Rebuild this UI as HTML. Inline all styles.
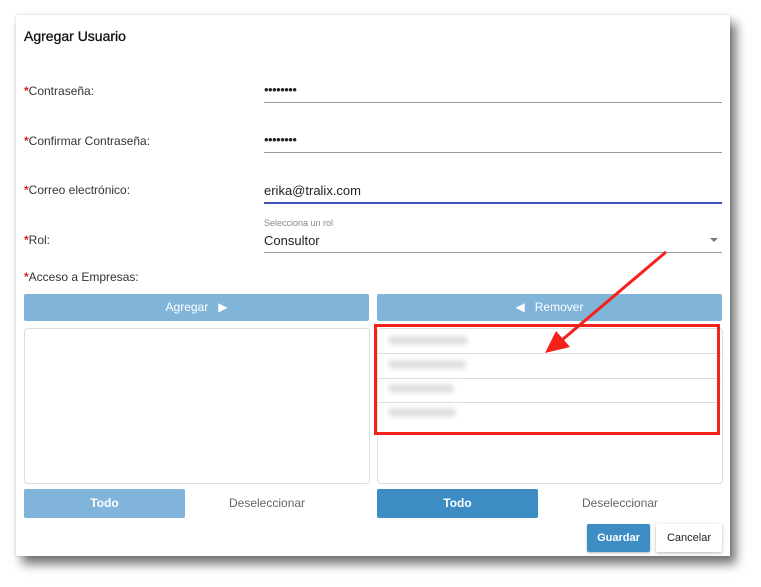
<!DOCTYPE html>
<html><head><style>
body{margin:0;width:761px;height:587px;background:#fff;position:relative;overflow:hidden;font-family:"Liberation Sans",sans-serif;color:#222}
.dlg{position:absolute;left:16px;top:15px;width:714px;height:541px;background:#fff;box-shadow:6px 8px 10px rgba(0,0,0,.55),0 0 3px rgba(0,0,0,.15)}
.a{position:absolute}
.lbl{font-size:12px;color:#333}
.lbl b{color:#e02020;font-weight:bold}
.ul{position:absolute;left:264px;width:458px;height:1px;background:#999}
.btn{position:absolute;color:#fff;font-size:12px;font-weight:bold;text-align:center;border-radius:2px}
.list{position:absolute;border:1px solid #ddd;border-radius:4px;background:#fff}
.blur{position:absolute;left:388px;height:9px;border-radius:4px;background:#e0e0e0;filter:blur(2.5px)}
.sep{position:absolute;left:378px;width:343px;height:1px;background:#ddd}
</style></head><body>
<div class="dlg"></div>
<div class="a" style="left:24px;top:28px;font-size:14px;color:#111;-webkit-text-stroke:0.3px #111">Agregar Usuario</div>
<div class="a lbl" style="left:24px;top:84px"><b>*</b>Contraseña:</div>
<div class="a lbl" style="left:24px;top:134px"><b>*</b>Confirmar Contraseña:</div>
<div class="a lbl" style="left:24px;top:183px"><b>*</b>Correo electrónico:</div>
<div class="a lbl" style="left:24px;top:233px"><b>*</b>Rol:</div>
<div class="a lbl" style="left:24px;top:270px"><b>*</b>Acceso a Empresas:</div>
<div class="a" style="left:264px;top:82px;font-size:13px;letter-spacing:-0.5px">••••••••</div>
<div class="ul" style="top:102px"></div>
<div class="a" style="left:264px;top:132px;font-size:13px;letter-spacing:-0.5px">••••••••</div>
<div class="ul" style="top:152px"></div>
<div class="a" style="left:264px;top:183px;font-size:13px">erika@tralix.com</div>
<div class="ul" style="top:202px;height:2px;background:#3f51b5"></div>
<div class="a" style="left:264px;top:218px;font-size:9px;color:#888">Selecciona un rol</div>
<div class="a" style="left:264px;top:233px;font-size:13px">Consultor</div>
<div class="a" style="left:710px;top:238px;width:0;height:0;border-left:4px solid transparent;border-right:4px solid transparent;border-top:4px solid #777"></div>
<div class="ul" style="top:252px"></div>
<div class="btn" style="left:24px;top:294px;width:345px;height:27px;line-height:27px;background:#80b4d9;font-weight:normal">Agregar &nbsp;&nbsp;▶</div>
<div class="btn" style="left:377px;top:294px;width:345px;height:27px;line-height:27px;background:#80b4d9;font-weight:normal">◀ &nbsp;&nbsp;Remover</div>
<div class="list" style="left:24px;top:328px;width:344px;height:154px"></div>
<div class="list" style="left:377px;top:328px;width:344px;height:154px"></div>
<div class="sep" style="top:353px"></div><div class="sep" style="top:378px"></div><div class="sep" style="top:402px"></div>
<div class="blur" style="top:336px;width:80px"></div>
<div class="blur" style="top:360px;width:78px"></div>
<div class="blur" style="top:384px;width:66px"></div>
<div class="blur" style="top:408px;width:68px"></div>
<div class="a" style="left:374px;top:324px;width:340px;height:105px;border:3px solid #f5221b"></div>
<svg class="a" style="left:0;top:0" width="761" height="587"><line x1="666" y1="252" x2="562" y2="340" stroke="#f5221b" stroke-width="3"/><polygon points="545,353 556,331 570,347" fill="#f5221b"/></svg>
<div class="btn" style="left:24px;top:489px;width:161px;height:29px;line-height:29px;background:#80b4da">Todo</div>
<div class="a" style="left:229px;top:496px;font-size:12px;color:#666">Deseleccionar</div>
<div class="btn" style="left:377px;top:489px;width:161px;height:29px;line-height:29px;background:#3d8cc4">Todo</div>
<div class="a" style="left:582px;top:496px;font-size:12px;color:#666">Deseleccionar</div>
<div class="btn" style="left:587px;top:524px;width:63px;height:28px;line-height:28px;background:#3d8cc4;font-size:11px;box-shadow:0 1px 2px rgba(0,0,0,.3)">Guardar</div>
<div class="btn" style="left:656px;top:524px;width:66px;height:28px;line-height:28px;background:#fff;color:#222;font-weight:normal;font-size:11px;box-shadow:0 1px 3px rgba(0,0,0,.3)">Cancelar</div>
</body></html>
